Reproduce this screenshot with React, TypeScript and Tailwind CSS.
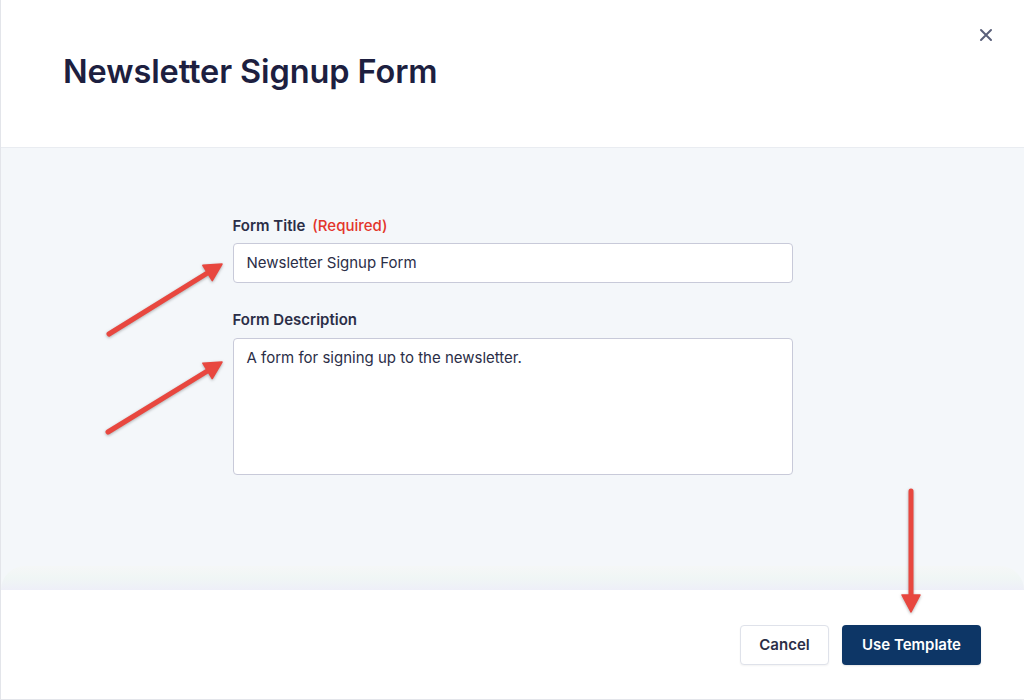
import React from "react";

function Arrow({ x1, y1, x2, y2 }: { x1: number; y1: number; x2: number; y2: number }) {
  const dx = x2 - x1;
  const dy = y2 - y1;
  const len = Math.sqrt(dx * dx + dy * dy);
  const ux = dx / len;
  const uy = dy / len;
  const hl = 17;
  const hw = 9;
  const bx = x2 - ux * hl;
  const by = y2 - uy * hl;
  const px = -uy;
  const py = ux;
  const pts = `${x2},${y2} ${bx + px * hw},${by + py * hw} ${bx - px * hw},${by - py * hw}`;
  return (
    <g>
      <line x1={x1} y1={y1} x2={bx + ux * 2} y2={by + uy * 2} stroke="#e8473f" strokeWidth={5} strokeLinecap="round" />
      <polygon points={pts} fill="#e8473f" stroke="#e8473f" strokeWidth={1.5} strokeLinejoin="round" />
    </g>
  );
}

export default function App() {
  return (
    <div
      className="relative w-[1024px] h-[700px] overflow-hidden bg-white flex flex-col border-l border-b border-[#e3e5ea]"
      style={{ fontFamily: "Inter, 'Noto Sans', sans-serif" }}
    >
      <div className="h-[148px] shrink-0 flex items-center pl-[62px] pb-[2px] border-b border-[#e9ecf1] relative">
        <h1 className="text-[32.5px] font-semibold text-[#1d1f40] tracking-[-0.1px]">Newsletter Signup Form</h1>
        <button className="absolute right-[30px] top-[27px] text-[#5a607a]">
          <svg width="16" height="16" viewBox="0 0 16 16" fill="none">
            <path d="M3 3L13 13M13 3L3 13" stroke="currentColor" strokeWidth="2" strokeLinecap="round" />
          </svg>
        </button>
      </div>

      <div className="relative flex-1 bg-[#f4f7fa]">
        <div className="w-[560px] mx-auto pt-[68px] flex flex-col">
          <label className="flex items-center gap-[7px] text-[15px] font-semibold text-[#2b2e47] h-[20px]">
            Form Title <span className="text-[#e3352b] font-medium">(Required)</span>
          </label>
          <div className="mt-[7px] h-[40px] bg-white border border-[#c8cad9] rounded-[4px] flex items-center px-[13px] text-[15px] text-[#2b2e47]">
            Newsletter Signup Form
          </div>
          <label className="mt-[27px] text-[15px] font-semibold text-[#2b2e47] h-[20px] flex items-center">
            Form Description
          </label>
          <div className="mt-[8px] h-[137px] bg-white border border-[#c8cad9] rounded-[4px] px-[13px] pt-[8px] text-[15px] text-[#2b2e47]">
            A form for signing up to the newsletter.
          </div>
        </div>
        <div className="absolute left-0 right-0 bottom-0 h-[24px] rounded-t-[40px] bg-gradient-to-b from-[#f5f7f7] via-[#f0f6f5] to-[#eeeff8]" />
      </div>

      <div className="h-[109px] shrink-0 bg-white flex items-center justify-end gap-[13px] pr-[43px] pt-[1px]">
        <button className="h-[40px] w-[89px] rounded-[4px] border border-[#dfe2ea] bg-white text-[15px] font-semibold text-[#2b2e47] shadow-[0_1px_2px_rgba(0,0,0,0.05)]">
          Cancel
        </button>
        <button className="h-[40px] w-[139px] rounded-[4px] bg-[#0d3666] text-[15px] font-semibold text-white shadow-[0_1px_2px_rgba(0,0,0,0.1)]">
          Use Template
        </button>
      </div>

      <svg className="absolute inset-0 pointer-events-none" width="1024" height="700" style={{ filter: "drop-shadow(0 1px 1.5px rgba(0,0,0,0.3))" }}>
        <Arrow x1={108} y1={334} x2={221} y2={264} />
        <Arrow x1={107} y1={432} x2={221} y2={362} />
        <Arrow x1={910} y1={491} x2={910} y2={612} />
      </svg>
    </div>
  );
}
